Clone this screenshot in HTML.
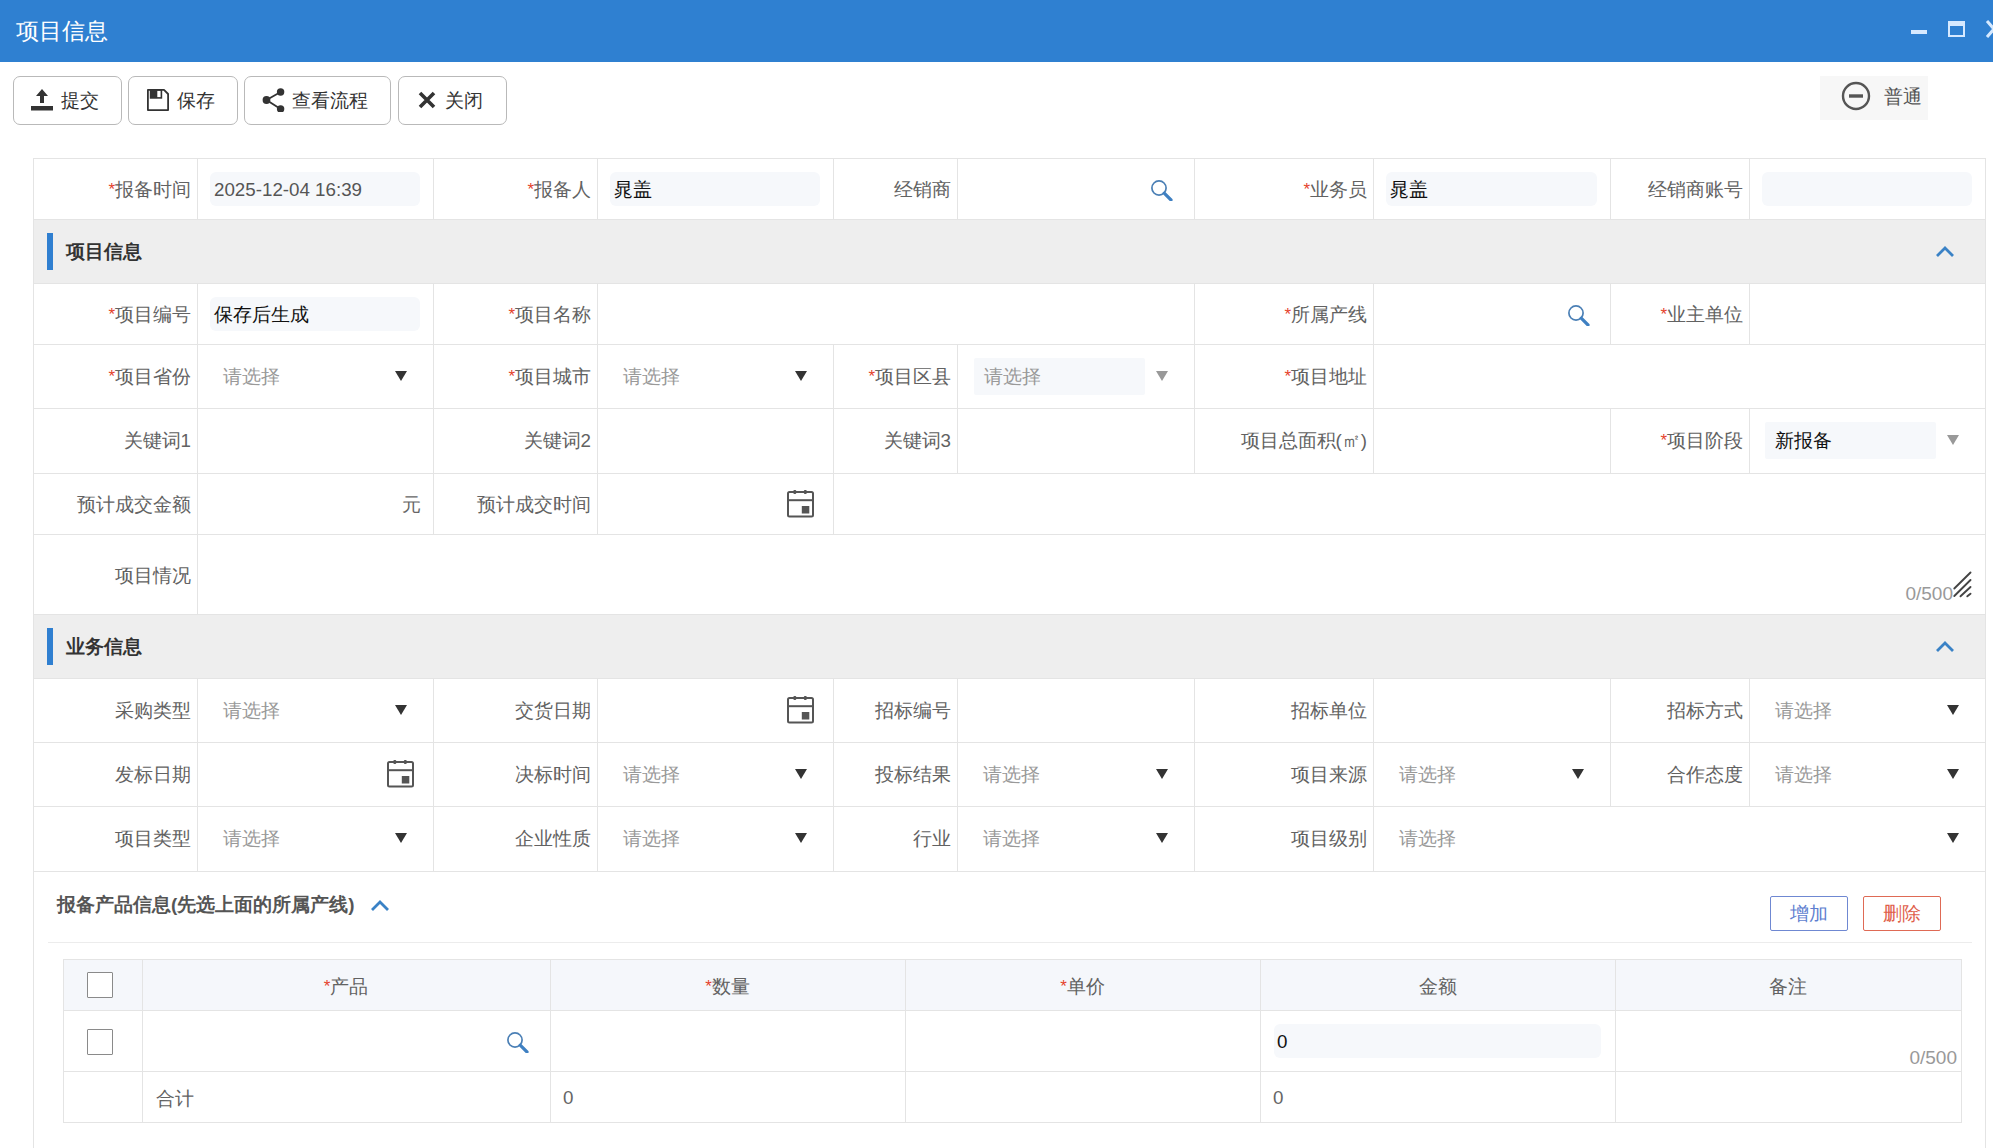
<!DOCTYPE html><html><head><meta charset="utf-8"><style>
html,body{margin:0;padding:0;background:#fff;width:1993px;height:1148px;overflow:hidden;position:relative;font-family:"Liberation Sans", sans-serif;}
.t{position:absolute;white-space:nowrap;font-size:18.75px;}
.req{color:#e5432d;font-size:17px;vertical-align:1px;margin-right:0px}
</style></head><body>
<div style="position:absolute;left:0px;top:0px;width:1993px;height:62px;background:#2f80d1"></div>
<div class="t" style="left:16px;top:17.0px;height:30px;line-height:30px;color:#fff;font-size:22.5px">项目信息</div>
<div style="position:absolute;left:1911px;top:30px;width:16px;height:4px;background:#d6e9ff"></div>
<div style="position:absolute;left:1948px;top:21px;width:17px;height:16px;box-sizing:border-box;border:2.5px solid #d6e9ff;border-top-width:5px"></div>
<div style="position:absolute;left:1984px;top:19px;width:20px;height:20px"><svg width="20" height="20" viewBox="0 0 20 20"><path d="M3 2 L17 18 M17 2 L3 18" stroke="#d6e9ff" stroke-width="3"/></svg></div>
<div style="position:absolute;left:13px;top:76px;width:109px;height:49px;box-sizing:border-box;border:1px solid #b9b9b9;border-radius:7px;background:#fff"></div>
<div style="position:absolute;left:31px;top:89px;width:22px;height:22px"><svg width="22" height="22" viewBox="0 0 22 22"><path d="M11 0 L17 7 L13 7 L13 14 L9 14 L9 7 L5 7 Z" fill="#333"/><rect x="0" y="17" width="22" height="4.5" fill="#333"/></svg></div>
<div class="t" style="left:61px;top:86.0px;height:30px;line-height:30px;color:#333">提交</div>
<div style="position:absolute;left:128px;top:76px;width:110px;height:49px;box-sizing:border-box;border:1px solid #b9b9b9;border-radius:7px;background:#fff"></div>
<div style="position:absolute;left:146px;top:88px;width:24px;height:24px"><svg width="24" height="24" viewBox="0 0 24 24"><path d="M1.9 1.9 H18 L22.1 6 V22.1 H1.9 Z" fill="none" stroke="#333" stroke-width="1.8" stroke-linejoin="round"/><rect x="4.6" y="1.9" width="10.8" height="8" fill="none" stroke="#333" stroke-width="1.6"/><rect x="4" y="1.5" width="7.3" height="8.6" fill="#333"/></svg></div>
<div class="t" style="left:177px;top:86.0px;height:30px;line-height:30px;color:#333">保存</div>
<div style="position:absolute;left:244px;top:76px;width:147px;height:49px;box-sizing:border-box;border:1px solid #b9b9b9;border-radius:7px;background:#fff"></div>
<div style="position:absolute;left:261px;top:88px;width:24px;height:24px"><svg width="24" height="24" viewBox="0 0 24 24"><path d="M19.6 4 L5.5 12 L19.6 21" fill="none" stroke="#333" stroke-width="1.8"/><circle cx="19.6" cy="4" r="3.7" fill="#333"/><circle cx="5.5" cy="12" r="3.9" fill="#333"/><circle cx="19.6" cy="21" r="3.7" fill="#333"/></svg></div>
<div class="t" style="left:292px;top:86.0px;height:30px;line-height:30px;color:#333">查看流程</div>
<div style="position:absolute;left:398px;top:76px;width:109px;height:49px;box-sizing:border-box;border:1px solid #b9b9b9;border-radius:7px;background:#fff"></div>
<div style="position:absolute;left:418px;top:91px;width:18px;height:18px"><svg width="18" height="18" viewBox="0 0 18 18"><path d="M2 2 L16 16 M16 2 L2 16" stroke="#333" stroke-width="3.6"/></svg></div>
<div class="t" style="left:445px;top:86.0px;height:30px;line-height:30px;color:#333">关闭</div>
<div style="position:absolute;left:1820px;top:76px;width:108px;height:44px;background:#f7f7f7"></div>
<div style="position:absolute;left:1841px;top:81px;width:30px;height:30px"><svg width="30" height="30" viewBox="0 0 30 30"><circle cx="15" cy="15" r="13" fill="none" stroke="#555" stroke-width="2.4"/><rect x="8" y="13.3" width="14" height="3.4" fill="#555"/></svg></div>
<div class="t" style="left:1884px;top:82.0px;height:30px;line-height:30px;color:#555">普通</div>
<div style="position:absolute;left:33px;top:220px;width:1952px;height:63px;background:#eeeeee"></div>
<div style="position:absolute;left:33px;top:615px;width:1952px;height:63px;background:#eeeeee"></div>
<div style="position:absolute;left:33px;top:158px;width:1px;height:990px;background:#e4e4e4"></div>
<div style="position:absolute;left:1985px;top:158px;width:1px;height:990px;background:#e4e4e4"></div>
<div style="position:absolute;left:33px;top:158px;width:1953px;height:1px;background:#e4e4e4"></div>
<div style="position:absolute;left:33px;top:219px;width:1953px;height:1px;background:#e4e4e4"></div>
<div style="position:absolute;left:33px;top:283px;width:1953px;height:1px;background:#e4e4e4"></div>
<div style="position:absolute;left:33px;top:344px;width:1953px;height:1px;background:#e4e4e4"></div>
<div style="position:absolute;left:33px;top:408px;width:1953px;height:1px;background:#e4e4e4"></div>
<div style="position:absolute;left:33px;top:473px;width:1953px;height:1px;background:#e4e4e4"></div>
<div style="position:absolute;left:33px;top:534px;width:1953px;height:1px;background:#e4e4e4"></div>
<div style="position:absolute;left:33px;top:614px;width:1953px;height:1px;background:#e4e4e4"></div>
<div style="position:absolute;left:33px;top:678px;width:1953px;height:1px;background:#e4e4e4"></div>
<div style="position:absolute;left:33px;top:742px;width:1953px;height:1px;background:#e4e4e4"></div>
<div style="position:absolute;left:33px;top:806px;width:1953px;height:1px;background:#e4e4e4"></div>
<div style="position:absolute;left:33px;top:871px;width:1953px;height:1px;background:#e4e4e4"></div>
<div style="position:absolute;left:197px;top:158px;width:1px;height:61px;background:#e4e4e4"></div>
<div style="position:absolute;left:433px;top:158px;width:1px;height:61px;background:#e4e4e4"></div>
<div style="position:absolute;left:597px;top:158px;width:1px;height:61px;background:#e4e4e4"></div>
<div style="position:absolute;left:833px;top:158px;width:1px;height:61px;background:#e4e4e4"></div>
<div style="position:absolute;left:957px;top:158px;width:1px;height:61px;background:#e4e4e4"></div>
<div style="position:absolute;left:1194px;top:158px;width:1px;height:61px;background:#e4e4e4"></div>
<div style="position:absolute;left:1373px;top:158px;width:1px;height:61px;background:#e4e4e4"></div>
<div style="position:absolute;left:1610px;top:158px;width:1px;height:61px;background:#e4e4e4"></div>
<div style="position:absolute;left:1749px;top:158px;width:1px;height:61px;background:#e4e4e4"></div>
<div style="position:absolute;left:197px;top:283px;width:1px;height:61px;background:#e4e4e4"></div>
<div style="position:absolute;left:433px;top:283px;width:1px;height:61px;background:#e4e4e4"></div>
<div style="position:absolute;left:597px;top:283px;width:1px;height:61px;background:#e4e4e4"></div>
<div style="position:absolute;left:1194px;top:283px;width:1px;height:61px;background:#e4e4e4"></div>
<div style="position:absolute;left:1373px;top:283px;width:1px;height:61px;background:#e4e4e4"></div>
<div style="position:absolute;left:1610px;top:283px;width:1px;height:61px;background:#e4e4e4"></div>
<div style="position:absolute;left:1749px;top:283px;width:1px;height:61px;background:#e4e4e4"></div>
<div style="position:absolute;left:197px;top:344px;width:1px;height:64px;background:#e4e4e4"></div>
<div style="position:absolute;left:433px;top:344px;width:1px;height:64px;background:#e4e4e4"></div>
<div style="position:absolute;left:597px;top:344px;width:1px;height:64px;background:#e4e4e4"></div>
<div style="position:absolute;left:833px;top:344px;width:1px;height:64px;background:#e4e4e4"></div>
<div style="position:absolute;left:957px;top:344px;width:1px;height:64px;background:#e4e4e4"></div>
<div style="position:absolute;left:1194px;top:344px;width:1px;height:64px;background:#e4e4e4"></div>
<div style="position:absolute;left:1373px;top:344px;width:1px;height:64px;background:#e4e4e4"></div>
<div style="position:absolute;left:197px;top:408px;width:1px;height:65px;background:#e4e4e4"></div>
<div style="position:absolute;left:433px;top:408px;width:1px;height:65px;background:#e4e4e4"></div>
<div style="position:absolute;left:597px;top:408px;width:1px;height:65px;background:#e4e4e4"></div>
<div style="position:absolute;left:833px;top:408px;width:1px;height:65px;background:#e4e4e4"></div>
<div style="position:absolute;left:957px;top:408px;width:1px;height:65px;background:#e4e4e4"></div>
<div style="position:absolute;left:1194px;top:408px;width:1px;height:65px;background:#e4e4e4"></div>
<div style="position:absolute;left:1373px;top:408px;width:1px;height:65px;background:#e4e4e4"></div>
<div style="position:absolute;left:1610px;top:408px;width:1px;height:65px;background:#e4e4e4"></div>
<div style="position:absolute;left:1749px;top:408px;width:1px;height:65px;background:#e4e4e4"></div>
<div style="position:absolute;left:197px;top:473px;width:1px;height:61px;background:#e4e4e4"></div>
<div style="position:absolute;left:433px;top:473px;width:1px;height:61px;background:#e4e4e4"></div>
<div style="position:absolute;left:597px;top:473px;width:1px;height:61px;background:#e4e4e4"></div>
<div style="position:absolute;left:833px;top:473px;width:1px;height:61px;background:#e4e4e4"></div>
<div style="position:absolute;left:197px;top:534px;width:1px;height:80px;background:#e4e4e4"></div>
<div style="position:absolute;left:197px;top:678px;width:1px;height:64px;background:#e4e4e4"></div>
<div style="position:absolute;left:433px;top:678px;width:1px;height:64px;background:#e4e4e4"></div>
<div style="position:absolute;left:597px;top:678px;width:1px;height:64px;background:#e4e4e4"></div>
<div style="position:absolute;left:833px;top:678px;width:1px;height:64px;background:#e4e4e4"></div>
<div style="position:absolute;left:957px;top:678px;width:1px;height:64px;background:#e4e4e4"></div>
<div style="position:absolute;left:1194px;top:678px;width:1px;height:64px;background:#e4e4e4"></div>
<div style="position:absolute;left:1373px;top:678px;width:1px;height:64px;background:#e4e4e4"></div>
<div style="position:absolute;left:1610px;top:678px;width:1px;height:64px;background:#e4e4e4"></div>
<div style="position:absolute;left:1749px;top:678px;width:1px;height:64px;background:#e4e4e4"></div>
<div style="position:absolute;left:197px;top:742px;width:1px;height:64px;background:#e4e4e4"></div>
<div style="position:absolute;left:433px;top:742px;width:1px;height:64px;background:#e4e4e4"></div>
<div style="position:absolute;left:597px;top:742px;width:1px;height:64px;background:#e4e4e4"></div>
<div style="position:absolute;left:833px;top:742px;width:1px;height:64px;background:#e4e4e4"></div>
<div style="position:absolute;left:957px;top:742px;width:1px;height:64px;background:#e4e4e4"></div>
<div style="position:absolute;left:1194px;top:742px;width:1px;height:64px;background:#e4e4e4"></div>
<div style="position:absolute;left:1373px;top:742px;width:1px;height:64px;background:#e4e4e4"></div>
<div style="position:absolute;left:1610px;top:742px;width:1px;height:64px;background:#e4e4e4"></div>
<div style="position:absolute;left:1749px;top:742px;width:1px;height:64px;background:#e4e4e4"></div>
<div style="position:absolute;left:197px;top:806px;width:1px;height:65px;background:#e4e4e4"></div>
<div style="position:absolute;left:433px;top:806px;width:1px;height:65px;background:#e4e4e4"></div>
<div style="position:absolute;left:597px;top:806px;width:1px;height:65px;background:#e4e4e4"></div>
<div style="position:absolute;left:833px;top:806px;width:1px;height:65px;background:#e4e4e4"></div>
<div style="position:absolute;left:957px;top:806px;width:1px;height:65px;background:#e4e4e4"></div>
<div style="position:absolute;left:1194px;top:806px;width:1px;height:65px;background:#e4e4e4"></div>
<div style="position:absolute;left:1373px;top:806px;width:1px;height:65px;background:#e4e4e4"></div>
<div style="position:absolute;left:47px;top:232.5px;width:6px;height:37px;background:#2f7fd0"></div>
<div class="t" style="left:66px;top:237.0px;height:30px;line-height:30px;color:#333;font-weight:bold">项目信息</div>
<div style="position:absolute;left:1934px;top:243.0px;width:22px;height:14px"><svg width="22" height="14" viewBox="0 0 22 14"><path d="M3 13 L11 5 L19 13" fill="none" stroke="#3a82c6" stroke-width="2.8"/></svg></div>
<div style="position:absolute;left:47px;top:627.5px;width:6px;height:37px;background:#2f7fd0"></div>
<div class="t" style="left:66px;top:632.0px;height:30px;line-height:30px;color:#333;font-weight:bold">业务信息</div>
<div style="position:absolute;left:1934px;top:638.0px;width:22px;height:14px"><svg width="22" height="14" viewBox="0 0 22 14"><path d="M3 13 L11 5 L19 13" fill="none" stroke="#3a82c6" stroke-width="2.8"/></svg></div>
<div class="t" style="right:1802px;top:175.0px;height:30px;line-height:30px;text-align:right;color:#626262"><span class="req">*</span>报备时间</div>
<div style="position:absolute;left:210px;top:172px;width:210px;height:34px;background:#f6f8fb;border-radius:6px"></div>
<div class="t" style="left:214px;top:175.0px;height:30px;line-height:30px;color:#555">2025-12-04 16:39</div>
<div class="t" style="right:1402px;top:175.0px;height:30px;line-height:30px;text-align:right;color:#626262"><span class="req">*</span>报备人</div>
<div style="position:absolute;left:610px;top:172px;width:210px;height:34px;background:#f6f8fb;border-radius:6px"></div>
<div class="t" style="left:614px;top:175.0px;height:30px;line-height:30px;color:#111">晁盖</div>
<div class="t" style="right:1042px;top:175.0px;height:30px;line-height:30px;text-align:right;color:#626262">经销商</div>
<div style="position:absolute;left:1149px;top:177px;width:24px;height:24px"><svg width="24" height="24" viewBox="0 0 24 24"><circle cx="10" cy="11" r="7.1" fill="none" stroke="#4a7fb5" stroke-width="1.7"/><path d="M15.2 16.2 L22 23" stroke="#3f80c2" stroke-width="3.2" stroke-linecap="round"/></svg></div>
<div class="t" style="right:626px;top:175.0px;height:30px;line-height:30px;text-align:right;color:#626262"><span class="req">*</span>业务员</div>
<div style="position:absolute;left:1386px;top:172px;width:211px;height:34px;background:#f6f8fb;border-radius:6px"></div>
<div class="t" style="left:1390px;top:175.0px;height:30px;line-height:30px;color:#111">晁盖</div>
<div class="t" style="right:250px;top:175.0px;height:30px;line-height:30px;text-align:right;color:#626262">经销商账号</div>
<div style="position:absolute;left:1762px;top:172px;width:210px;height:34px;background:#f6f8fb;border-radius:6px"></div>
<div class="t" style="right:1802px;top:300.0px;height:30px;line-height:30px;text-align:right;color:#626262"><span class="req">*</span>项目编号</div>
<div style="position:absolute;left:210px;top:297px;width:210px;height:34px;background:#f6f8fb;border-radius:6px"></div>
<div class="t" style="left:214px;top:300.0px;height:30px;line-height:30px;color:#111">保存后生成</div>
<div class="t" style="right:1402px;top:300.0px;height:30px;line-height:30px;text-align:right;color:#626262"><span class="req">*</span>项目名称</div>
<div class="t" style="right:626px;top:300.0px;height:30px;line-height:30px;text-align:right;color:#626262"><span class="req">*</span>所属产线</div>
<div style="position:absolute;left:1566px;top:302px;width:24px;height:24px"><svg width="24" height="24" viewBox="0 0 24 24"><circle cx="10" cy="11" r="7.1" fill="none" stroke="#4a7fb5" stroke-width="1.7"/><path d="M15.2 16.2 L22 23" stroke="#3f80c2" stroke-width="3.2" stroke-linecap="round"/></svg></div>
<div class="t" style="right:250px;top:300.0px;height:30px;line-height:30px;text-align:right;color:#626262"><span class="req">*</span>业主单位</div>
<div class="t" style="right:1802px;top:362.0px;height:30px;line-height:30px;text-align:right;color:#626262"><span class="req">*</span>项目省份</div>
<div class="t" style="left:223px;top:362.0px;height:30px;line-height:30px;color:#999">请选择</div>
<div style="position:absolute;left:395px;top:371px;width:0;height:0;border-left:6.5px solid transparent;border-right:6.5px solid transparent;border-top:10px solid #333"></div>
<div class="t" style="right:1402px;top:362.0px;height:30px;line-height:30px;text-align:right;color:#626262"><span class="req">*</span>项目城市</div>
<div class="t" style="left:623px;top:362.0px;height:30px;line-height:30px;color:#999">请选择</div>
<div style="position:absolute;left:795px;top:371px;width:0;height:0;border-left:6.5px solid transparent;border-right:6.5px solid transparent;border-top:10px solid #333"></div>
<div class="t" style="right:1042px;top:362.0px;height:30px;line-height:30px;text-align:right;color:#626262"><span class="req">*</span>项目区县</div>
<div style="position:absolute;left:974px;top:358px;width:171px;height:37px;background:#f6f8fb;border-radius:2px"></div>
<div class="t" style="left:984px;top:362.0px;height:30px;line-height:30px;color:#999">请选择</div>
<div style="position:absolute;left:1156px;top:371px;width:0;height:0;border-left:6.5px solid transparent;border-right:6.5px solid transparent;border-top:10px solid #999"></div>
<div class="t" style="right:626px;top:362.0px;height:30px;line-height:30px;text-align:right;color:#626262"><span class="req">*</span>项目地址</div>
<div class="t" style="right:1802px;top:426.0px;height:30px;line-height:30px;text-align:right;color:#626262">关键词1</div>
<div class="t" style="right:1402px;top:426.0px;height:30px;line-height:30px;text-align:right;color:#626262">关键词2</div>
<div class="t" style="right:1042px;top:426.0px;height:30px;line-height:30px;text-align:right;color:#626262">关键词3</div>
<div class="t" style="right:626px;top:426.0px;height:30px;line-height:30px;text-align:right;color:#626262">项目总面积(㎡)</div>
<div class="t" style="right:250px;top:426.0px;height:30px;line-height:30px;text-align:right;color:#626262"><span class="req">*</span>项目阶段</div>
<div style="position:absolute;left:1765px;top:422px;width:171px;height:37px;background:#f6f8fb;border-radius:2px"></div>
<div class="t" style="left:1775px;top:426.0px;height:30px;line-height:30px;color:#111">新报备</div>
<div style="position:absolute;left:1947px;top:435px;width:0;height:0;border-left:6.5px solid transparent;border-right:6.5px solid transparent;border-top:10px solid #999"></div>
<div class="t" style="right:1802px;top:490.0px;height:30px;line-height:30px;text-align:right;color:#626262">预计成交金额</div>
<div class="t" style="right:1572px;top:490.0px;height:30px;line-height:30px;text-align:right;color:#666">元</div>
<div class="t" style="right:1402px;top:490.0px;height:30px;line-height:30px;text-align:right;color:#626262">预计成交时间</div>
<div style="position:absolute;left:786px;top:489px;width:28px;height:30px"><svg width="28" height="30" viewBox="0 0 28 30"><rect x="2" y="3" width="25" height="24.5" rx="1.5" fill="none" stroke="#555" stroke-width="2"/><rect x="2" y="10.2" width="25" height="2" fill="#555"/><rect x="7.3" y="1" width="3" height="4" rx="1.2" fill="#555"/><rect x="17.8" y="1" width="3" height="4" rx="1.2" fill="#555"/><rect x="15.8" y="17" width="7.5" height="7.5" fill="#555"/></svg></div>
<div class="t" style="right:1802px;top:561.0px;height:30px;line-height:30px;text-align:right;color:#626262">项目情况</div>
<div class="t" style="right:40px;top:579.0px;height:30px;line-height:30px;text-align:right;color:#999;font-size:19px">0/500</div>
<div style="position:absolute;left:1950px;top:568px;width:24px;height:32px"><svg width="24" height="32" viewBox="0 0 24 32"><path d="M4.3 20.5 L20.5 4.5 M4.3 28 L20.5 12 M10.5 28.3 L20.5 19 M17.3 28.3 L20.5 25.7" stroke="#444" stroke-width="1.9" stroke-linecap="round"/></svg></div>
<div class="t" style="right:1802px;top:696.0px;height:30px;line-height:30px;text-align:right;color:#626262">采购类型</div>
<div class="t" style="left:223px;top:696.0px;height:30px;line-height:30px;color:#999">请选择</div>
<div style="position:absolute;left:395px;top:705px;width:0;height:0;border-left:6.5px solid transparent;border-right:6.5px solid transparent;border-top:10px solid #333"></div>
<div class="t" style="right:1402px;top:696.0px;height:30px;line-height:30px;text-align:right;color:#626262">交货日期</div>
<div style="position:absolute;left:786px;top:695px;width:28px;height:30px"><svg width="28" height="30" viewBox="0 0 28 30"><rect x="2" y="3" width="25" height="24.5" rx="1.5" fill="none" stroke="#555" stroke-width="2"/><rect x="2" y="10.2" width="25" height="2" fill="#555"/><rect x="7.3" y="1" width="3" height="4" rx="1.2" fill="#555"/><rect x="17.8" y="1" width="3" height="4" rx="1.2" fill="#555"/><rect x="15.8" y="17" width="7.5" height="7.5" fill="#555"/></svg></div>
<div class="t" style="right:1042px;top:696.0px;height:30px;line-height:30px;text-align:right;color:#626262">招标编号</div>
<div class="t" style="right:626px;top:696.0px;height:30px;line-height:30px;text-align:right;color:#626262">招标单位</div>
<div class="t" style="right:250px;top:696.0px;height:30px;line-height:30px;text-align:right;color:#626262">招标方式</div>
<div class="t" style="left:1775px;top:696.0px;height:30px;line-height:30px;color:#999">请选择</div>
<div style="position:absolute;left:1947px;top:705px;width:0;height:0;border-left:6.5px solid transparent;border-right:6.5px solid transparent;border-top:10px solid #333"></div>
<div class="t" style="right:1802px;top:760.0px;height:30px;line-height:30px;text-align:right;color:#626262">发标日期</div>
<div style="position:absolute;left:386px;top:759px;width:28px;height:30px"><svg width="28" height="30" viewBox="0 0 28 30"><rect x="2" y="3" width="25" height="24.5" rx="1.5" fill="none" stroke="#555" stroke-width="2"/><rect x="2" y="10.2" width="25" height="2" fill="#555"/><rect x="7.3" y="1" width="3" height="4" rx="1.2" fill="#555"/><rect x="17.8" y="1" width="3" height="4" rx="1.2" fill="#555"/><rect x="15.8" y="17" width="7.5" height="7.5" fill="#555"/></svg></div>
<div class="t" style="right:1402px;top:760.0px;height:30px;line-height:30px;text-align:right;color:#626262">决标时间</div>
<div class="t" style="left:623px;top:760.0px;height:30px;line-height:30px;color:#999">请选择</div>
<div style="position:absolute;left:795px;top:769px;width:0;height:0;border-left:6.5px solid transparent;border-right:6.5px solid transparent;border-top:10px solid #333"></div>
<div class="t" style="right:1042px;top:760.0px;height:30px;line-height:30px;text-align:right;color:#626262">投标结果</div>
<div class="t" style="left:983px;top:760.0px;height:30px;line-height:30px;color:#999">请选择</div>
<div style="position:absolute;left:1156px;top:769px;width:0;height:0;border-left:6.5px solid transparent;border-right:6.5px solid transparent;border-top:10px solid #333"></div>
<div class="t" style="right:626px;top:760.0px;height:30px;line-height:30px;text-align:right;color:#626262">项目来源</div>
<div class="t" style="left:1399px;top:760.0px;height:30px;line-height:30px;color:#999">请选择</div>
<div style="position:absolute;left:1572px;top:769px;width:0;height:0;border-left:6.5px solid transparent;border-right:6.5px solid transparent;border-top:10px solid #333"></div>
<div class="t" style="right:250px;top:760.0px;height:30px;line-height:30px;text-align:right;color:#626262">合作态度</div>
<div class="t" style="left:1775px;top:760.0px;height:30px;line-height:30px;color:#999">请选择</div>
<div style="position:absolute;left:1947px;top:769px;width:0;height:0;border-left:6.5px solid transparent;border-right:6.5px solid transparent;border-top:10px solid #333"></div>
<div class="t" style="right:1802px;top:824.0px;height:30px;line-height:30px;text-align:right;color:#626262">项目类型</div>
<div class="t" style="left:223px;top:824.0px;height:30px;line-height:30px;color:#999">请选择</div>
<div style="position:absolute;left:395px;top:833px;width:0;height:0;border-left:6.5px solid transparent;border-right:6.5px solid transparent;border-top:10px solid #333"></div>
<div class="t" style="right:1402px;top:824.0px;height:30px;line-height:30px;text-align:right;color:#626262">企业性质</div>
<div class="t" style="left:623px;top:824.0px;height:30px;line-height:30px;color:#999">请选择</div>
<div style="position:absolute;left:795px;top:833px;width:0;height:0;border-left:6.5px solid transparent;border-right:6.5px solid transparent;border-top:10px solid #333"></div>
<div class="t" style="right:1042px;top:824.0px;height:30px;line-height:30px;text-align:right;color:#626262">行业</div>
<div class="t" style="left:983px;top:824.0px;height:30px;line-height:30px;color:#999">请选择</div>
<div style="position:absolute;left:1156px;top:833px;width:0;height:0;border-left:6.5px solid transparent;border-right:6.5px solid transparent;border-top:10px solid #333"></div>
<div class="t" style="right:626px;top:824.0px;height:30px;line-height:30px;text-align:right;color:#626262">项目级别</div>
<div class="t" style="left:1399px;top:824.0px;height:30px;line-height:30px;color:#999">请选择</div>
<div style="position:absolute;left:1947px;top:833px;width:0;height:0;border-left:6.5px solid transparent;border-right:6.5px solid transparent;border-top:10px solid #333"></div>
<div class="t" style="left:57px;top:890.0px;height:30px;line-height:30px;color:#555;font-weight:bold;font-size:18.75px">报备产品信息(先选上面的所属产线)</div>
<div style="position:absolute;left:369px;top:897px;width:22px;height:14px"><svg width="22" height="14" viewBox="0 0 22 14"><path d="M3 13 L11 5 L19 13" fill="none" stroke="#3a82c6" stroke-width="2.8"/></svg></div>
<div style="position:absolute;left:1770px;top:896px;width:78px;height:35px;box-sizing:border-box;border:1px solid #6f88d2;background:#fff;border-radius:2px"></div>
<div class="t" style="left:1609px;width:400px;top:899.0px;height:30px;line-height:30px;text-align:center;color:#5f7fd0;font-size:19px">增加</div>
<div style="position:absolute;left:1863px;top:896px;width:78px;height:35px;box-sizing:border-box;border:1px solid #df6a55;background:#fff;border-radius:2px"></div>
<div class="t" style="left:1702px;width:400px;top:899.0px;height:30px;line-height:30px;text-align:center;color:#e0604a;font-size:19px">删除</div>
<div style="position:absolute;left:48px;top:942px;width:1924px;height:1px;background:#ececec"></div>
<div style="position:absolute;left:63px;top:959px;width:1898px;height:51px;background:#f5f7fb"></div>
<div style="position:absolute;left:63px;top:959px;width:1899px;height:1px;background:#e4e4e4"></div>
<div style="position:absolute;left:63px;top:1010px;width:1899px;height:1px;background:#e4e4e4"></div>
<div style="position:absolute;left:63px;top:1071px;width:1899px;height:1px;background:#e4e4e4"></div>
<div style="position:absolute;left:63px;top:1122px;width:1899px;height:1px;background:#e4e4e4"></div>
<div style="position:absolute;left:63px;top:959px;width:1px;height:163px;background:#e4e4e4"></div>
<div style="position:absolute;left:142px;top:959px;width:1px;height:163px;background:#e4e4e4"></div>
<div style="position:absolute;left:550px;top:959px;width:1px;height:163px;background:#e4e4e4"></div>
<div style="position:absolute;left:905px;top:959px;width:1px;height:163px;background:#e4e4e4"></div>
<div style="position:absolute;left:1260px;top:959px;width:1px;height:163px;background:#e4e4e4"></div>
<div style="position:absolute;left:1615px;top:959px;width:1px;height:163px;background:#e4e4e4"></div>
<div style="position:absolute;left:1961px;top:959px;width:1px;height:163px;background:#e4e4e4"></div>
<div style="position:absolute;left:87px;top:972px;width:26px;height:26px;box-sizing:border-box;border:1px solid #8a8a8a;background:#fff;border-radius:1px"></div>
<div style="position:absolute;left:87px;top:1029px;width:26px;height:26px;box-sizing:border-box;border:1px solid #8a8a8a;background:#fff;border-radius:1px"></div>
<div class="t" style="left:146.0px;width:400px;top:972.0px;height:30px;line-height:30px;text-align:center;color:#626262"><span class="req">*</span>产品</div>
<div class="t" style="left:527.5px;width:400px;top:972.0px;height:30px;line-height:30px;text-align:center;color:#626262"><span class="req">*</span>数量</div>
<div class="t" style="left:882.5px;width:400px;top:972.0px;height:30px;line-height:30px;text-align:center;color:#626262"><span class="req">*</span>单价</div>
<div class="t" style="left:1237.5px;width:400px;top:972.0px;height:30px;line-height:30px;text-align:center;color:#626262">金额</div>
<div class="t" style="left:1588.0px;width:400px;top:972.0px;height:30px;line-height:30px;text-align:center;color:#626262">备注</div>
<div style="position:absolute;left:505px;top:1029px;width:24px;height:24px"><svg width="24" height="24" viewBox="0 0 24 24"><circle cx="10" cy="11" r="7.1" fill="none" stroke="#4a7fb5" stroke-width="1.7"/><path d="M15.2 16.2 L22 23" stroke="#3f80c2" stroke-width="3.2" stroke-linecap="round"/></svg></div>
<div style="position:absolute;left:1274px;top:1024px;width:327px;height:34px;background:#f6f8fb;border-radius:6px"></div>
<div class="t" style="left:1277px;top:1027.0px;height:30px;line-height:30px;color:#111">0</div>
<div class="t" style="right:36px;top:1043.0px;height:30px;line-height:30px;text-align:right;color:#999;font-size:19px">0/500</div>
<div class="t" style="left:156px;top:1084.0px;height:30px;line-height:30px;color:#626262">合计</div>
<div class="t" style="left:563px;top:1083.0px;height:30px;line-height:30px;color:#666">0</div>
<div class="t" style="left:1273px;top:1083.0px;height:30px;line-height:30px;color:#666">0</div>
</body></html>
